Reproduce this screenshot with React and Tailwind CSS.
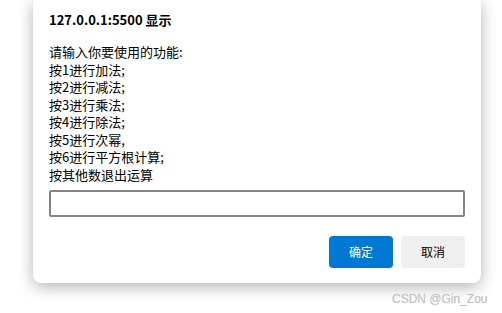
export default function App() {
  return (
    <div
      className="relative w-[502px] h-[313px] bg-white overflow-hidden"
      style={{ fontFamily: '"Noto Sans CJK SC", "Noto Sans", sans-serif' }}
    >
      <div className="ml-[33px] w-[448px] h-[283px] bg-white rounded-b-[8px] shadow-[0_4px_16px_rgba(0,0,0,0.3)] px-4 pt-[11px] flex flex-col">
        <div className="text-[13px] leading-[18px] font-bold text-black">127.0.0.1:5500 显示</div>
        <div className="mt-[14px] text-[13px] leading-[17.5px] text-black">
          <div>请输入你要使用的功能:</div>
          <div>按1进行加法;</div>
          <div>按2进行减法;</div>
          <div>按3进行乘法;</div>
          <div>按4进行除法;</div>
          <div>按5进行次幂,</div>
          <div>按6进行平方根计算;</div>
          <div>按其他数退出运算</div>
        </div>
        <div className="mt-[7px] h-[27px] w-full border-2 border-[#858585] rounded-[2px]" />
        <div className="mt-[19px] flex justify-end gap-2">
          <button className="w-16 h-8 rounded-[4px] bg-[#0078d4] text-white text-[12px]">确定</button>
          <button className="w-16 h-8 rounded-[4px] bg-[#efefef] text-black text-[12px]">取消</button>
        </div>
      </div>
      <div
        className="absolute left-[392px] top-[291px] text-[12px] leading-[16px] font-normal text-[#c4c4c4] [text-shadow:0_0_1px_rgba(0,0,0,0.12)]"
        style={{ fontFamily: '"Liberation Sans", "Noto Sans", sans-serif' }}
      >
        CSDN @Gin_Zou
      </div>
    </div>
  );
}
